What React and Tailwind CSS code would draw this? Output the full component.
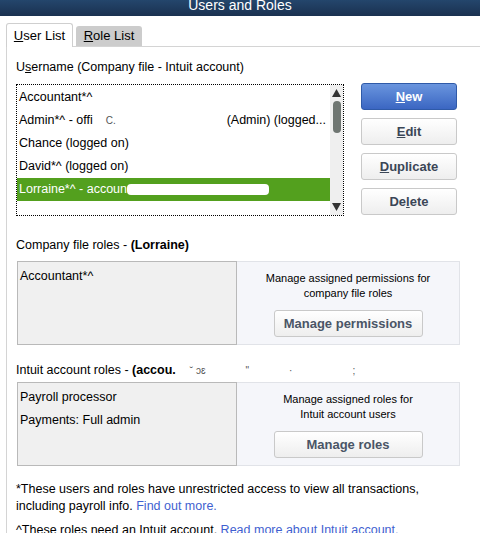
import React from 'react'

const font = { fontFamily: '"Liberation Sans", Arial, sans-serif' }

const users = [
    { left: 'Accountant*^' },
    { left: 'Admin*^ - offi', mid: true, right: '(Admin) (logged...' },
    { left: 'Chance (logged on)' },
    { left: 'David*^ (logged on)' },
    { left: 'Lorraine*^ - accoun', selected: true },
]

const SideButton = ({ primary, children }) => (
    <button
        className={`h-[27px] w-[96px] rounded-[3px] border text-[13px] font-bold ${primary
            ? 'border-[#2f5aa8] bg-gradient-to-b from-[#6a95de] to-[#3b66c2] text-white'
            : 'border-[#c9c9c9] bg-gradient-to-b from-white to-[#eeeeee] text-[#3b4656]'
            }`}
    >
        {children}
    </button>
)

const RoleBox = ({ items, note, action }) => (
    <div className="flex h-[84px] w-[443px]">
        <div className="w-[220px] border border-[#b9b9b9] bg-[#f0f0f0] px-[2px] pt-[3px] text-[12.5px] text-black">
            {items.map((t) => (
                <div key={t} className="leading-[23px]">{t}</div>
            ))}
        </div>
        <div className="flex flex-1 flex-col items-center border border-l-0 border-[#e1e3e8] bg-[#f5f6fa] pt-[9px]">
            <div className="text-center text-[11px] leading-[15px] text-black">
                {note.map((n) => (
                    <div key={n}>{n}</div>
                ))}
            </div>
            <button className="mt-[9px] h-[27px] w-[149px] rounded-[3px] border border-[#c9c9c9] bg-gradient-to-b from-white to-[#eeeeee] text-[13px] font-bold text-[#4a5566]">
                {action}
            </button>
        </div>
    </div>
)

export default function App() {
    return (
        <div className="h-[533px] w-[480px] overflow-hidden bg-white" style={font}>
            {/* title bar */}
            <div className="flex h-[16px] justify-center overflow-hidden bg-gradient-to-b from-[#24466c] to-[#1a3150]">
                <span className="-mt-[3px] text-[14px] leading-[16px] text-white">Users and Roles</span>
            </div>

            {/* tabs */}
            <div className="flex items-end pl-[6px] pt-[7px]">
                <div className="relative z-10 -mb-px flex h-[24px] w-[67px] items-center justify-center rounded-t-[3px] border border-b-0 border-[#cfcfcf] bg-white text-[13px] text-black">
                    <span><u>U</u>ser List</span>
                </div>
                <div className="ml-[3px] flex h-[20px] w-[66px] items-center justify-center rounded-t-[3px] bg-[#cccccc] text-[13px] text-black">
                    <span><u>R</u>ole List</span>
                </div>
            </div>

            {/* panel */}
            <div className="ml-[6px] h-[500px] border-l border-t border-[#d4d4d4] pl-[9px] pt-[13px]">
                <div className="text-[12.5px] leading-[15px] text-black">
                    U<u>s</u>ername (Company file - Intuit account)
                </div>

                <div className="mt-[9px] flex">
                    {/* list */}
                    <div className="flex h-[132px] w-[328px] border border-dotted border-black">
                        <div className="flex-1 pt-px">
                            {users.map((u) => (
                                <div
                                    key={u.left}
                                    className={`flex h-[23px] items-center justify-between pl-[2px] pr-[4px] text-[12.5px] ${u.selected ? 'bg-[#53a01e] text-white' : 'text-black'}`}
                                >
                                    <span className="flex items-center">
                                        {u.left}
                                        {u.mid && <span className="ml-[13px] text-[10px] text-[#555]">C.</span>}
                                        {u.selected && <span className="h-[11px] w-[142px] rounded-[4px] bg-white" />}
                                    </span>
                                    {u.right && <span>{u.right}</span>}
                                </div>
                            ))}
                        </div>
                        <div className="flex w-[13px] flex-col items-center bg-[#efefef]">
                            <svg width="9" height="8" viewBox="0 0 9 8" className="mt-[4px]">
                                <path d="M4.5 0L9 8H0z" fill="#333" />
                            </svg>
                            <div className="mt-[4px] h-[32px] w-[8px] rounded-[4px] bg-[#6f7672]" />
                            <div className="flex-1" />
                            <svg width="9" height="8" viewBox="0 0 9 8" className="mb-[4px]">
                                <path d="M0 0H9L4.5 8z" fill="#333" />
                            </svg>
                        </div>
                    </div>

                    {/* buttons */}
                    <div className="ml-[17px] -mt-px flex flex-col gap-[8px]">
                        <SideButton primary><u>N</u>ew</SideButton>
                        <SideButton><u>E</u>dit</SideButton>
                        <SideButton><u>D</u>uplicate</SideButton>
                        <SideButton>De<u>l</u>ete</SideButton>
                    </div>
                </div>

                <div className="mt-[22px] text-[12.5px] leading-[15px] text-black">
                    Company file roles - <b>(Lorraine)</b>
                </div>
                <div className="mt-[8px] ml-px">
                    <RoleBox
                        items={['Accountant*^']}
                        note={['Manage assigned permissions for', 'company file roles']}
                        action="Manage permissions"
                    />
                </div>

                <div className="mt-[18px] text-[12.5px] leading-[15px] text-black">
                    Intuit account roles - <b>(accou.</b>
                    <span className="ml-[14px] text-[10px] text-[#555]">˘ ɔɛ</span>
                    <span className="ml-[40px] text-[10px] text-[#555]">"</span>
                    <span className="ml-[40px] text-[10px] text-[#555]">·</span>
                    <span className="ml-[60px] text-[10px] text-[#555]">;</span>
                </div>
                <div className="mt-[4px] ml-px">
                    <RoleBox
                        items={['Payroll processor', 'Payments: Full admin']}
                        note={['Manage assigned roles for', 'Intuit account users']}
                        action="Manage roles"
                    />
                </div>

                <div className="mt-[15px] text-[12.5px] leading-[17px] text-black">
                    <p>*These users and roles have unrestricted access to view all transactions,</p>
                    <p>
                        including payroll info. <span className="text-[#3f5fd0]">Find out more.</span>
                    </p>
                    <p className="mt-[7px]">
                        ^These roles need an Intuit account. <span className="text-[#3f5fd0]">Read more about Intuit account.</span>
                    </p>
                </div>
            </div>
        </div>
    )
}
